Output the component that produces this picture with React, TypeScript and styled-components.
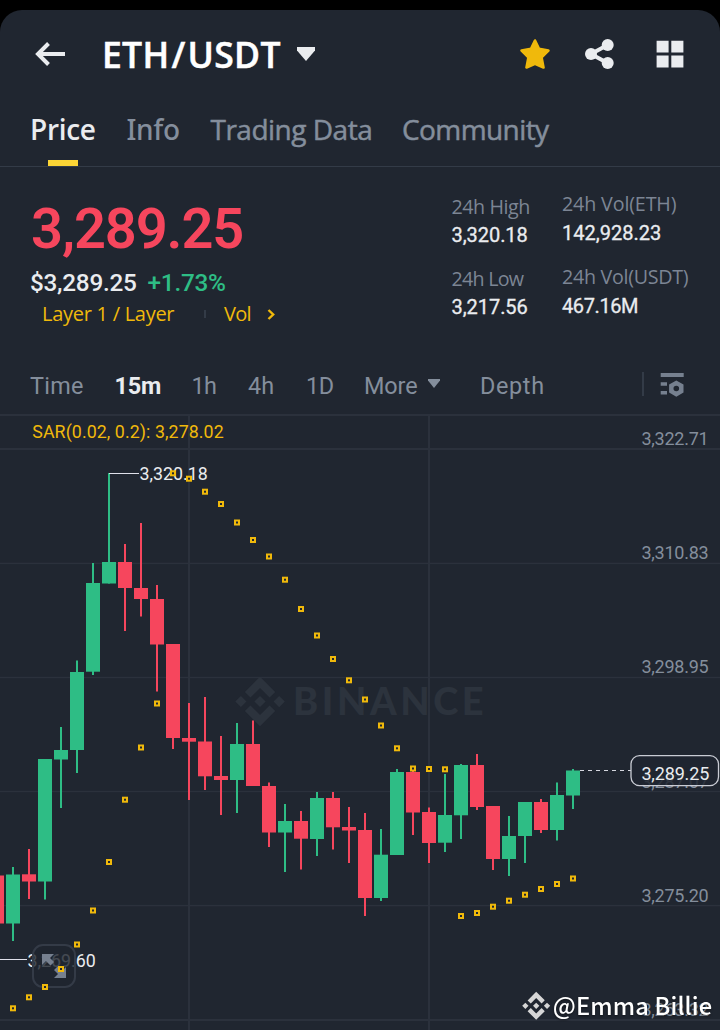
import React from 'react';
import styled, { createGlobalStyle, css } from 'styled-components';

const c = {
  bg: '#202630',
  line: '#2b313c',
  text: '#eaecef',
  muted: '#848e9c',
  faint: '#76808f',
  red: '#f6465d',
  green: '#2ebd85',
  gold: '#f0b90b',
};

const sans = '"Open Sans", "Noto Sans", sans-serif';
const digits = 'Roboto, "Liberation Sans", sans-serif';

const GlobalStyle = createGlobalStyle`
  * { box-sizing: border-box; }
  body { margin: 0; background: #000; }
`;

const Page = styled.main`
  width: 720px;
  height: 1030px;
  padding-top: 10px;
  background: #000;
  overflow: hidden;
`;

const Panel = styled.div`
  display: flex;
  flex-direction: column;
  height: 1020px;
  background: ${c.bg};
  border-radius: 22px 22px 0 0;
  overflow: hidden;
  color: ${c.text};
  font-family: ${sans};
  white-space: nowrap;
`;

const Header = styled.header`
  display: flex;
  align-items: center;
  height: 88px;
  padding: 0 35px;
`;

const Title = styled.h1`
  margin: 0 0 0 36px;
  width: 194.5px;
  font: 600 35.5px/48px ${sans};
  letter-spacing: 0.3px;
  color: #fff;
  -webkit-text-stroke: 0.5px #fff;
`;

const Slash = styled.span`
  margin: 0 2px;
`;

const Actions = styled.div`
  display: flex;
  align-items: center;
  gap: 35px;
  margin-left: auto;
`;

const Tabs = styled.nav`
  display: grid;
  grid-template-columns: 96.5px 84px 191.5px auto;
  height: 69px;
  padding: 12px 0 0 30px;
  border-bottom: 1px solid #333b47;
`;

const Tab = styled.a<{ $active?: boolean; $spacing: number; $serifI?: boolean }>`
  position: relative;
  font: 400 28px/38px ${sans};
  letter-spacing: ${(p) => p.$spacing}px;
  color: ${c.muted};
  -webkit-text-stroke: 0.5px ${c.muted};
  ${(p) =>
    p.$serifI &&
    css`
      font-family: 'Noto Sans', sans-serif;
      font-weight: 500;
      -webkit-text-stroke: 0;
    `}
  ${(p) =>
    p.$active &&
    css`
      font-weight: 600;
      color: ${c.text};
      -webkit-text-stroke: 0;
      &::after {
        content: '';
        position: absolute;
        left: 18px;
        bottom: 0;
        width: 30px;
        height: 6px;
        background: #fcd535;
      }
    `}
`;

const Summary = styled.section`
  display: flex;
  height: 188px;
  padding-left: 30px;
`;

const Quote = styled.div`
  width: 421.5px;
  padding-top: 32px;
`;

const LastPrice = styled.div`
  padding-left: 1px;
  font: 600 56px/60px ${digits};
  letter-spacing: -1.1px;
  color: ${c.red};
`;

const Fiat = styled.div`
  display: flex;
  gap: 11px;
  margin-top: 10px;
  font: 500 24.3px/28px ${digits};
  letter-spacing: -0.25px;
`;

const Change = styled.span`
  color: ${c.green};
`;

const Tags = styled.div`
  display: flex;
  align-items: center;
  margin-top: 4px;
  padding-left: 12px;
  font: 400 20px/26px ${sans};
  color: ${c.gold};
`;

const Layer = styled.span`
  width: 162px;
  letter-spacing: -0.27px;
`;

const TagRule = styled.i`
  width: 2px;
  height: 8px;
  margin-right: 18px;
  background: #333b47;
`;

const VolTag = styled.span`
  width: 42.5px;
  letter-spacing: -0.7px;
`;

const StatColumn = styled.dl<{ $top: number; $width?: number }>`
  margin: 0;
  padding-top: ${(p) => p.$top}px;
  width: ${(p) => p.$width ?? 130}px;
`;

const StatLabel = styled.dt<{ $spacing: number }>`
  font: 400 19.7px/24px ${sans};
  letter-spacing: ${(p) => p.$spacing}px;
  color: #7c8594;
`;

const StatValue = styled.dd<{ $spacing?: number; $gap?: number }>`
  margin: ${(p) => p.$gap ?? 4}px 0 ${(p) => (p.$gap ? 19.4 : 20)}px;
  font: 400 20px/24px ${digits};
  letter-spacing: ${(p) => p.$spacing ?? -0.05}px;
  -webkit-text-stroke: 0.3px ${c.text};
`;

const Intervals = styled.nav`
  display: grid;
  grid-template-columns: 84.5px 77px 56.5px 58px 58px 64px 52px 162px auto;
  height: 59px;
  padding: 16px 0 0 30px;
`;

const Interval = styled.a<{ $active?: boolean; $spacing?: number }>`
  font: ${(p) => (p.$active ? 700 : 400)} 23.4px/30px ${digits};
  letter-spacing: ${(p) => p.$spacing ?? 0}px;
  color: ${(p) => (p.$active ? c.text : c.muted)};
`;

const Settings = styled.div`
  display: flex;
  align-items: flex-start;
  gap: 16px;
`;

const SettingsRule = styled.i`
  width: 2px;
  height: 24px;
  margin-top: 1px;
  background: #333b47;
`;

const Chart = styled.svg`
  display: block;
  flex: none;
`;

const ChartText = styled.text<{ $size?: number; $spacing?: number }>`
  font-family: ${digits};
  font-size: ${(p) => p.$size ?? 18}px;
  letter-spacing: ${(p) => p.$spacing ?? -0.25}px;
`;

const BrandText = styled.text`
  font: 900 38px Lato, sans-serif;
  letter-spacing: 3.6px;
`;

const Signature = styled.text`
  font: 500 23.7px "Noto Sans CJK SC", sans-serif;
  letter-spacing: 0.14px;
  filter: drop-shadow(0 1px 1px rgba(0, 0, 0, 0.5));
`;

// [center x, body top, body bottom, wick top, wick bottom, rising]
type Candle = [number, number, number, number, number, 0 | 1];
const candles: Candle[] = [
  [-3, 875.5, 923.5, 875.5, 923.5, 0],
  [13, 874.5, 923.5, 867, 941, 1],
  [29, 874.3, 881.5, 849, 899, 0],
  [45, 759, 881.5, 759, 899.5, 1],
  [61, 750, 759.5, 727, 808, 1],
  [77, 672, 750, 660.5, 773, 1],
  [93, 583, 671.7, 563, 675, 1],
  [109, 562, 583.5, 473, 583.5, 1],
  [125, 562, 588, 544, 631, 0],
  [141, 588, 599, 523, 616.5, 0],
  [157, 599, 644.5, 585, 691.5, 0],
  [173, 644, 738, 644, 749, 0],
  [189, 738, 741.7, 703, 800, 0],
  [205, 741.5, 776.3, 697, 790, 0],
  [221, 776, 780, 736, 815, 0],
  [237, 744, 780, 723, 813, 1],
  [253, 744, 786, 720.5, 786, 0],
  [269, 786, 832.5, 782.5, 847, 0],
  [285, 821, 832.5, 804, 872, 1],
  [301, 821, 838.7, 811, 869.5, 0],
  [317, 798, 839, 792, 856, 1],
  [333, 798, 827.3, 792, 849.5, 0],
  [349, 827, 830.5, 807, 863, 0],
  [365, 830, 898, 813, 916, 0],
  [381, 854.7, 898, 829, 901, 1],
  [397, 772, 855, 769, 855, 1],
  [413, 772, 812.5, 769, 835, 0],
  [429, 812, 843, 807.5, 863, 0],
  [445, 815, 842.7, 774, 852, 1],
  [461, 765, 815.3, 764, 839, 1],
  [477, 765, 807, 754, 810, 0],
  [493, 806, 859, 806, 870, 0],
  [509, 836, 859, 816, 876, 1],
  [525, 802, 836, 802, 863, 1],
  [541, 802, 830, 799, 833, 0],
  [557, 795, 830, 782.5, 840.5, 1],
  [573, 770.5, 795.5, 769, 809, 1],
];

// Parabolic SAR levels, one for each candle from x = 13 on
const sar = [
  1008.3, 997.3, 987, 969, 944.5, 910.5, 862, 799.7, 747.5, 703.5, 473.3, 478.7,
  491.7, 504, 522.5, 540, 556.5, 579.7, 609, 635.5, 659, 680.3, 699.5, 725.5,
  748.3, 768.5, 769, 769.3, 916, 913, 906.7, 900.7, 894.7, 889, 884, 878.5,
];

const axis: [string, number][] = [
  ['3,322.71', 445],
  ['3,310.83', 559.2],
  ['3,298.95', 673.4],
  ['3,287.07', 788],
  ['3,275.20', 902],
  ['3,263.32', 1016.3],
];

const rows = [563.4, 677.5, 791.5, 905.6];

const Diamond = ({ x, y, size, fill }: { x: number; y: number; size: number; fill: string }) => (
  <path
    transform={`translate(${x} ${y}) scale(${size / 24})`}
    fill={fill}
    d="M16.624 13.9202l2.7175 2.7154-7.353 7.353-7.353-7.352 2.7175-2.7164 4.6355 4.6595 4.6356-4.6595zm4.6366-4.6366L24 12l-2.7154 2.7164L18.5682 12l2.6924-2.7164zm-9.272.001l2.7163 2.6914-2.7164 2.7174v-.001L9.2721 12l2.7164-2.7154zm-9.2722-.001L5.4088 12l-2.6914 2.6924L0 12l2.7164-2.7164zM11.9885.0115l7.353 7.329-2.7174 2.7154-4.6356-4.6356-4.6355 4.6595-2.7174-2.7154 7.353-7.353z"
  />
);

const PriceChart = () => (
  <Chart width="720" height="616" viewBox="0 414 720 616">
    <g fill={c.line}>
      <rect x="0" y="414" width="720" height="2" />
      <rect x="0" y="448" width="720" height="2" />
      {rows.map((y) => (
        <rect key={y} x="0" y={y - 0.7} width="720" height="1.4" />
      ))}
      <rect x="0" y="1019" width="720" height="2" />
      <rect x="188" y="416" width="2" height="614" />
      <rect x="428" y="416" width="2" height="614" />
    </g>

    <Diamond x={235.3} y={676.8} size={49.5} fill="#2c333d" />
    <BrandText x="293" y="715" fill="#2c333d">BINANCE</BrandText>

    {axis.map(([label, y]) => (
      <ChartText key={label} x="641.4" y={y} fill={c.muted}>{label}</ChartText>
    ))}

    {candles.map(([x, top, bottom, high, low, up]) => (
      <g key={x} fill={up ? c.green : c.red}>
        <rect x={x - 1} y={high} width="2" height={low - high} />
        <rect x={x - 7} y={top} width="14" height={bottom - top} />
      </g>
    ))}

    <ChartText x="32.3" y="438" $size={17.8} $spacing={0.08} fill={c.gold}>
      SAR(0.02, 0.2): 3,278.02
    </ChartText>

    <rect x="109" y="473" width="30" height="1" fill="#dfe0ea" />
    <ChartText x="139.500" y="480" $size={17.8} $spacing={0.03} fill={c.text}>3,320.18</ChartText>
    <rect x="0" y="959" width="27" height="1" fill="#dfe0ea" />
    <ChartText x="27.500" y="967" $size={17.8} $spacing={0.03} fill={c.text}>3,269.60</ChartText>

    <rect x="33" y="945" width="42" height="42" rx="10" fill={c.bg} fillOpacity="0.82" stroke="#343b47" strokeWidth="2" />
    <path fill={c.faint} d="M42 954h12l-4 4 4 4-3.5 3.500-4.500-4.500-4 4z M66 978h-12l4-4-4-4 3.500-3.500 4.500 4.500 4-4z" />

    {sar.map((y, i) => (
      <rect key={i} x={11 + i * 16} y={y - 2} width="4" height="4" fill={c.bg} stroke={c.gold} strokeWidth="2" />
    ))}

    <path d="M580 770.5H631" stroke="#d5d7df" strokeDasharray="4 4" />
    <rect x="631" y="755.6" width="87.500" height="30" rx="8.500" fill={c.bg} fillOpacity="0.85" stroke="#c9ccd4" strokeWidth="1.3" />
    <ChartText x="641.4" y="780" $spacing={-0.16} fill={c.text}>3,289.25</ChartText>

    <Diamond x={522.2} y={991.8} size={28} fill="#d6d6d6" />
    <Signature x="552.8" y="1014.7" fill="#fff">@Emma Billie</Signature>
  </Chart>
);

export default function App() {
  return (
    <Page>
      <GlobalStyle />
      <Panel>
        <Header>
          <svg width="31" height="26" viewBox="0 0 31 26" fill="none" stroke={c.text} strokeWidth="4">
            <path d="M3 13H30M13.500 2.500L3 13l10.500 10.500" />
          </svg>
          <Title>
            ETH<Slash>/</Slash>USDT
          </Title>
          <svg width="18" height="14" viewBox="0 0 18 14">
            <path d="M0 0h18v3.500L9 14 0 3.500z" fill={c.text} />
          </svg>
          <Actions>
            <svg width="30" height="30" viewBox="0 0 30 30">
              <path
                d="M15 1.500l4 8.400 9.400 1.600-6.800 6.900L23.500 28.500 15 24.700 6.500 28.500l1.900-10.100L1.600 11.500 11 9.900z"
                fill={c.gold}
                stroke={c.gold}
                strokeWidth="2.600"
                strokeLinejoin="round"
              />
            </svg>
            <svg width="29" height="30" viewBox="0 0 29 30" fill={c.text}>
              <path d="M22.500 6L6 15l16.500 9" fill="none" stroke={c.text} strokeWidth="4" />
              <circle cx="6" cy="15" r="6" />
              <circle cx="22.700" cy="6" r="6" />
              <circle cx="22.700" cy="24" r="6" />
            </svg>
            <svg width="36" height="28" viewBox="0 0 36 28" fill={c.text}>
              <path d="M7.600.7h12v11.800h-12zM22.300.7h12.100v11.800H22.300zM7.600 15.600h12v11.900h-12zM22.300 15.600h12.100v11.900H22.300z" />
            </svg>
          </Actions>
        </Header>

        <Tabs>
          <Tab $active $spacing={-0.3}>Price</Tab>
          <Tab $spacing={-0.3} $serifI>Info</Tab>
          <Tab $spacing={-0.5}>Trading Data</Tab>
          <Tab $spacing={-0.58}>Community</Tab>
        </Tabs>

        <Summary>
          <Quote>
            <LastPrice>3,289.25</LastPrice>
            <Fiat>
              <span>$3,289.25</span>
              <Change>+1.73%</Change>
            </Fiat>
            <Tags>
              <Layer>Layer 1 / Layer</Layer>
              <TagRule />
              <VolTag>Vol</VolTag>
              <svg width="9" height="11" viewBox="0 0 9 11" fill="none" stroke={c.gold} strokeWidth="2.400">
                <path d="M1.500 1l4.700 4.500-4.700 4.500" />
              </svg>
            </Tags>
          </Quote>
          <StatColumn $top={28} $width={110.5}>
            <StatLabel $spacing={-0.45}>24h High</StatLabel>
            <StatValue>3,320.18</StatValue>
            <StatLabel $spacing={-0.75}>24h Low</StatLabel>
            <StatValue>3,217.56</StatValue>
          </StatColumn>
          <StatColumn $top={25}>
            <StatLabel $spacing={-0.15}>24h Vol(ETH)</StatLabel>
            <StatValue $gap={5.4} $spacing={0}>142,928.23</StatValue>
            <StatLabel $spacing={-0.3}>24h Vol(USDT)</StatLabel>
            <StatValue $gap={5.4} $spacing={-0.4}>467.16M</StatValue>
          </StatColumn>
        </Summary>

        <Intervals>
          <Interval $spacing={0.25}>Time</Interval>
          <Interval $active $spacing={-0.15}>15m</Interval>
          <Interval $spacing={-0.6}>1h</Interval>
          <Interval>4h</Interval>
          <Interval $spacing={-0.3}>1D</Interval>
          <Interval $spacing={-0.1}>More</Interval>
          <svg width="12" height="18" viewBox="0 0 12 18">
            <path d="M0 8h12v1.500L6 17 0 9.500z" fill={c.muted} />
          </svg>
          <Interval $spacing={0.65}>Depth</Interval>
          <Settings>
            <SettingsRule />
            <svg width="24" height="26" viewBox="0 0 24 26" fill={c.faint}>
              <path d="M.7 2h23v4h-23zM.7 11.300H7v3.500H.7zM.7 20H7v3.500H.7z" />
              <path fillRule="evenodd" d="M16.300 9.500l7.200 4v8l-7.200 4.200-7.200-4.200v-8zM16.300 14.700a2.800 2.800 0 1 0 0 5.600 2.800 2.800 0 0 0 0-5.600z" />
            </svg>
          </Settings>
        </Intervals>

        <PriceChart />
      </Panel>
    </Page>
  );
}
